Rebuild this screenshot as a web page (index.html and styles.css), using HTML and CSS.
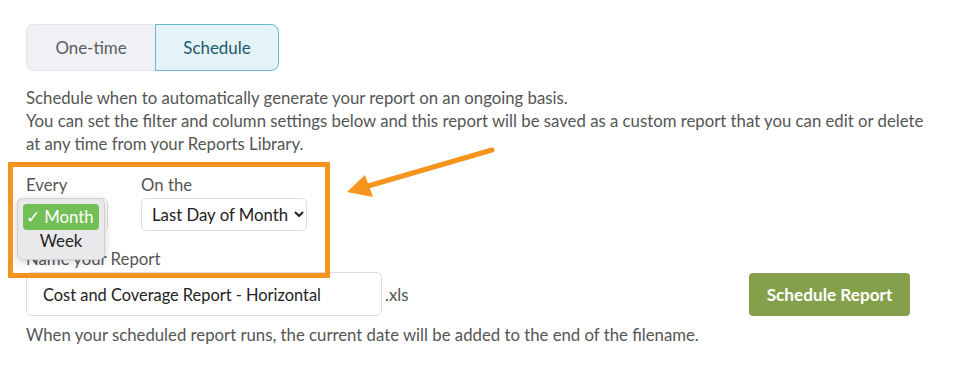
FILE: index.html
```html
<!DOCTYPE html>
<html>
<head>
<meta charset="utf-8">
<link rel="stylesheet" href="styles.css">
</head>
<body>
<div class="page">
  <div class="tabs">
    <div class="tab tab-off">One-time</div>
    <div class="tab tab-on">Schedule</div>
  </div>
  <p class="intro">Schedule when to automatically generate your report on an ongoing basis.<br>You can set the filter and column settings below and this report will be saved as a custom report that you can edit or delete at any time from your Reports Library.</p>
  <div class="row-fields">
    <div class="field field-every">
      <div class="label">Every</div>
      <div class="select select-every">Month</div>
    </div>
    <div class="field">
      <div class="label">On the</div>
      <div class="select select-on"><span class="sel-text">Last Day of Month</span>
        <svg class="chev" width="10" height="7" viewBox="0 0 10 7"><path d="M1.5 1.5 L5 5 L8.5 1.5" fill="none" stroke="#222" stroke-width="2" stroke-linecap="round" stroke-linejoin="round"/></svg>
      </div>
    </div>
  </div>
  <div class="label label-name">Name your Report</div>
  <div class="row-name">
    <div class="input">Cost and Coverage Report - Horizontal</div>
    <span class="ext">.xls</span>
    <div class="btn">Schedule Report</div>
  </div>
  <p class="help">When your scheduled report runs, the current date will be added to the end of the filename.</p>

  <div class="popup">
    <div class="opt opt-sel">✓ Month</div>
    <div class="opt opt-week">Week</div>
  </div>
  <div class="highlight"></div>
  <svg class="arrow" width="160" height="60" viewBox="0 0 160 60">
    <line x1="152" y1="10" x2="28" y2="46" stroke="#f7941e" stroke-width="5" stroke-linecap="round"/>
    <polygon points="7,52 25,35 33,57" fill="#f7941e"/>
  </svg>
</div>
</body>
</html>
```
FILE: styles.css
```css
html, body {
  margin: 0;
  padding: 0;
  background: #fff;
}
.page {
  position: relative;
  width: 961px;
  height: 371px;
  overflow: hidden;
  padding: 24px 0 0 26px;
  box-sizing: border-box;
  font-family: Lato, "Open Sans", sans-serif;
  font-size: 16.75px;
  color: #555;
}
.tabs {
  display: flex;
  height: 47px;
}
.tab {
  display: flex;
  align-items: center;
  justify-content: center;
  box-sizing: border-box;
  height: 47px;
  font-size: 16.9px;
}
.tab-off {
  width: 129px;
  background: #f0f1f5;
  border: 1px solid #e3e5ea;
  border-right: none;
  border-radius: 8px 0 0 8px;
  color: #5a5d62;
}
.tab-on {
  width: 124px;
  background: #e3f3f7;
  border: 1px solid #66b9cf;
  border-radius: 0 8px 8px 0;
  color: #22596b;
}
.intro {
  margin: 15px 0 0 0;
  line-height: 23px;
  width: 905px;
}
.row-fields {
  display: flex;
  margin-top: 18px;
}
.field-every {
  width: 115px;
}
.label {
  line-height: 23px;
  color: #555;
}
.select {
  box-sizing: border-box;
  height: 33px;
  margin-top: 2px;
  border: 1px solid #ddd;
  border-radius: 5px;
  display: flex;
  align-items: center;
  color: #222;
  background: #fff;
  white-space: nowrap;
}
.select-every {
  width: 91px;
  margin-left: -9px;
  padding-left: 10px;
}
.select-on {
  width: 166px;
  padding-left: 10px;
  gap: 6px;
}
.sel-text {
  flex-shrink: 0;
}
.chev {
  display: block;
  flex-shrink: 0;
}
.label-name {
  margin-top: 16px;
}
.row-name {
  display: flex;
  align-items: center;
  margin-top: 2px;
}
.input {
  box-sizing: border-box;
  width: 356px;
  height: 44px;
  border: 1px solid #ddd;
  border-radius: 5px;
  padding-left: 16px;
  display: flex;
  align-items: center;
  color: #222;
  font-size: 16.4px;
}
.ext {
  margin-left: 3px;
  width: 364px;
  color: #555;
}
.btn {
  width: 161px;
  height: 43px;
  background: #85a04a;
  border-radius: 4px;
  color: #fff;
  font-weight: 700;
  font-size: 17.2px;
  display: flex;
  align-items: center;
  justify-content: center;
}
.help {
  margin: 7px 0 0 0;
  line-height: 23px;
}
.popup {
  position: absolute;
  left: 17px;
  top: 198px;
  width: 88px;
  height: 62px;
  box-sizing: border-box;
  background: #e9e9ec;
  border: 1px solid #cfcfd3;
  border-radius: 6px;
  box-shadow: 0 2px 8px rgba(0,0,0,0.18);
  padding: 5px 5px 0 5px;
}
.opt {
  height: 26px;
  line-height: 26px;
  color: #222;
  text-align: center;
}
.opt-week {
  line-height: 22px;
}
.opt-sel {
  background: #72bf58;
  color: #fff;
  border-radius: 4px;
  text-align: left;
  padding-left: 3px;
}
.highlight {
  position: absolute;
  left: 8px;
  top: 162px;
  width: 322px;
  height: 116px;
  box-sizing: border-box;
  border: 5px solid #f7941e;
}
.arrow {
  position: absolute;
  left: 340px;
  top: 140px;
}
```
